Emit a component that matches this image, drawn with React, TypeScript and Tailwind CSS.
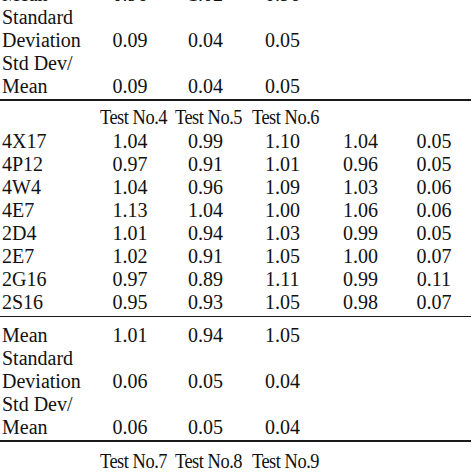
import React from 'react';

type Row = { label: string; values: string[] };

const topRows: Row[] = [
  { label: 'Mean', values: ['0.96', '1.02', '0.96'] },
  { label: 'Standard', values: [] },
  { label: 'Deviation', values: ['0.09', '0.04', '0.05'] },
  { label: 'Std Dev/', values: [] },
  { label: 'Mean', values: ['0.09', '0.04', '0.05'] },
];

const dataRows: Row[] = [
  { label: '4X17', values: ['1.04', '0.99', '1.10', '1.04', '0.05'] },
  { label: '4P12', values: ['0.97', '0.91', '1.01', '0.96', '0.05'] },
  { label: '4W4', values: ['1.04', '0.96', '1.09', '1.03', '0.06'] },
  { label: '4E7', values: ['1.13', '1.04', '1.00', '1.06', '0.06'] },
  { label: '2D4', values: ['1.01', '0.94', '1.03', '0.99', '0.05'] },
  { label: '2E7', values: ['1.02', '0.91', '1.05', '1.00', '0.07'] },
  { label: '2G16', values: ['0.97', '0.89', '1.11', '0.99', '0.11'] },
  { label: '2S16', values: ['0.95', '0.93', '1.05', '0.98', '0.07'] },
];

const summaryRows: Row[] = [
  { label: 'Mean', values: ['1.01', '0.94', '1.05'] },
  { label: 'Standard', values: [] },
  { label: 'Deviation', values: ['0.06', '0.05', '0.04'] },
  { label: 'Std Dev/', values: [] },
  { label: 'Mean', values: ['0.06', '0.05', '0.04'] },
];

const grid = 'grid grid-cols-[92px_76px_75px_79px_77px_70px] h-[23px] items-center';

function TableRow({ row }: { row: Row }) {
  return (
    <div className={grid}>
      <div className="pl-[2px] whitespace-nowrap">{row.label}</div>
      {[0, 1, 2, 3, 4].map((i) => (
        <div key={i} className="text-center">
          {row.values[i] ?? ''}
        </div>
      ))}
    </div>
  );
}

function HeaderRow({ tests }: { tests: string[] }) {
  return (
    <div className={`${grid} h-[24px]`}>
      <div />
      {tests.map((t) => (
        <div key={t} className="flex justify-center whitespace-nowrap">
          <span className="inline-block translate-x-[3px] scale-x-[0.92] tracking-[-0.5px]">{t}</span>
        </div>
      ))}
    </div>
  );
}

function Rule() {
  return <div className="h-[1.5px] bg-[#1a1a1a] w-[471px]" />;
}

export default function App() {
  return (
    <div
      className="w-[474px] h-[474px] overflow-hidden bg-white text-[#111] text-[20px] leading-[23px]"
      style={{ fontFamily: '"Liberation Serif", "Times New Roman", serif' }}
    >
      <div className="mt-[-17px] flex flex-col">
        {topRows.map((r, i) => (
          <TableRow key={'t' + i} row={r} />
        ))}
        <div className="mt-[1px] mb-[5px]">
          <Rule />
        </div>
        <HeaderRow tests={['Test No.4', 'Test No.5', 'Test No.6']} />
        {dataRows.map((r) => (
          <TableRow key={r.label} row={r} />
        ))}
        <div className="mt-[2px] mb-[7px]">
          <Rule />
        </div>
        {summaryRows.map((r, i) => (
          <TableRow key={'s' + i} row={r} />
        ))}
        <div className="mt-[1px] mb-[8px]">
          <Rule />
        </div>
        <HeaderRow tests={['Test No.7', 'Test No.8', 'Test No.9']} />
      </div>
    </div>
  );
}
